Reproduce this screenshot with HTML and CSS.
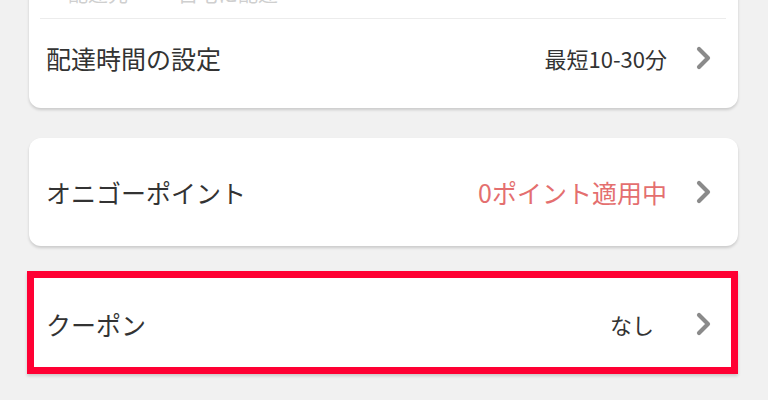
FILE: index.html
```html
<!DOCTYPE html>
<html lang="ja">
<head>
<meta charset="utf-8">
<link rel="stylesheet" href="styles.css">
</head>
<body>
<main class="page">
  <section class="card card-top">
    <div class="row row-faint">
      <span class="faint-a">配達先</span>
      <span class="faint-b">自宅に配達</span>
    </div>
    <div class="divider"></div>
    <div class="row row-time">
      <span class="label">配達時間の設定</span>
      <span class="value value-small">最短10-30分</span>
      <svg class="chev" viewBox="0 0 16 24" width="16" height="24"><polyline points="3,3 12,12 3,21"/></svg>
    </div>
  </section>

  <section class="card card-points">
    <div class="row">
      <span class="label">オニゴーポイント</span>
      <span class="value value-pink">0ポイント適用中</span>
      <svg class="chev" viewBox="0 0 16 24" width="16" height="24"><polyline points="3,3 12,12 3,21"/></svg>
    </div>
  </section>

  <section class="card card-coupon">
    <div class="row">
      <span class="label">クーポン</span>
      <span class="value value-small value-none">なし</span>
      <svg class="chev" viewBox="0 0 16 24" width="16" height="24"><polyline points="3,3 12,12 3,21"/></svg>
    </div>
  </section>
</main>
</body>
</html>
```
FILE: styles.css
```css
html, body {
  margin: 0;
  padding: 0;
  background: #f1f1f1;
  height: 100%;
  overflow: hidden;
}
body {
  font-family: "Noto Sans CJK JP", "Noto Sans", sans-serif;
  color: #333;
}
.page {
  display: flex;
  flex-direction: column;
  padding: 0 30px 0 29px;
}
.card {
  background: #fff;
  border-radius: 12px;
  box-shadow: 0 2px 3px rgba(0, 0, 0, 0.16);
}
.card-top {
  margin-top: -60px;
  padding-bottom: 11px;
}
.row {
  display: flex;
  align-items: center;
  height: 78px;
  padding: 0 26px 0 17px;
}
.row-faint {
  align-items: flex-end;
  padding-bottom: 14px;
  height: 64px;
  font-size: 20px;
  line-height: 20px;
  color: #cfcfcf;
}
.faint-a {
  margin-left: 22px;
}
.faint-b {
  margin-left: 50px;
}
.divider {
  height: 1px;
  background: #ececec;
  margin: 0 12px 0 11px;
}
.label {
  font-size: 25px;
  line-height: 1;
  color: #333;
  flex: 1;
}
.value {
  line-height: 1;
  margin-right: 29px;
}
.value-small {
  font-size: 22px;
  color: #333;
}
.value-none {
  margin-right: 42px;
}
.value-pink {
  font-size: 25px;
  color: #e46f6f;
}
.chev {
  display: block;
  width: 16px;
  height: 24px;
}
.chev polyline {
  fill: none;
  stroke: #8a8a8a;
  stroke-width: 4.2;
  stroke-linecap: round;
  stroke-linejoin: round;
}
.card-points {
  margin-top: 30px;
  padding: 15px 0;
}
.card-coupon {
  margin-top: 25px;
  border-radius: 0;
  border: 7px solid #ff0033;
  margin-left: -2px;
  padding: 7px 0 4px;
}
.card-coupon .row {
  padding-left: 12px;
  padding-right: 19px;
}
```
